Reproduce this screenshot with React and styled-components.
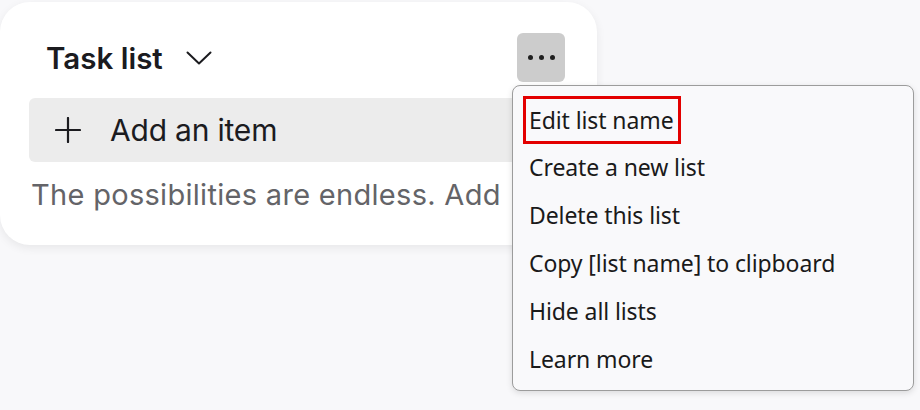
import React from "react";
import styled, { createGlobalStyle } from "styled-components";

const Global = createGlobalStyle`
  html, body { margin: 0; padding: 0; }
  body {
    background: #f8f8fa;
    width: 920px;
    height: 410px;
    overflow: hidden;
    font-family: "Inter", "Liberation Sans", sans-serif;
  }
`;

const Page = styled.div`
  position: relative;
  width: 920px;
  height: 410px;
  padding-top: 2px;
  box-sizing: border-box;
`;

const Card = styled.section`
  width: 597px;
  height: 243px;
  box-sizing: border-box;
  background: #ffffff;
  border-radius: 30px;
  box-shadow: 0 3px 10px rgba(0, 0, 0, 0.07);
  padding: 31px 32px 0 29px;
  display: flex;
  flex-direction: column;
`;

const Header = styled.div`
  display: flex;
  align-items: center;
  justify-content: space-between;
  height: 49px;
`;

const TitleGroup = styled.div`
  display: flex;
  align-items: center;
  gap: 23px;
  padding-left: 17px;
`;

const Title = styled.h2`
  margin: 0;
  font-size: 29.5px;
  font-weight: 600;
  color: #1b1b1f;
  letter-spacing: 0;
`;

const MoreButton = styled.button`
  width: 48px;
  height: 49px;
  border: none;
  border-radius: 6px;
  background: #cccccc;
  display: flex;
  align-items: center;
  justify-content: center;
  gap: 6px;
  padding: 0;
`;

const Dot = styled.span`
  width: 5px;
  height: 5px;
  border-radius: 50%;
  background: #1f1f1f;
`;

const AddRow = styled.div`
  margin-top: 16px;
  height: 64px;
  border-radius: 6px;
  background: #ececec;
  display: flex;
  align-items: center;
  padding-left: 26px;
  gap: 29px;
`;

const AddLabel = styled.span`
  font-size: 30px;
  color: #1b1b1f;
  font-weight: 400;
  letter-spacing: -0.2px;
`;

const Hint = styled.p`
  margin: 15px 0 0 2px;
  font-size: 29px;
  color: #646468;
  white-space: nowrap;
  letter-spacing: 0.3px;
`;

const Menu = styled.ul`
  position: absolute;
  left: 512px;
  top: 85px;
  width: 402px;
  height: 306px;
  box-sizing: border-box;
  margin: 0;
  list-style: none;
  padding: 9px 0 7px;
  background: #f9f9fb;
  border: 1px solid #9c9c9c;
  border-radius: 8px;
  box-shadow: 0 2px 6px rgba(0, 0, 0, 0.12);
  font-family: "Noto Sans", "Open Sans", sans-serif;
`;

const Item = styled.li`
  height: 48px;
  display: flex;
  align-items: center;
  padding-left: ${(p) => (p.$highlight ? "10px" : "16px")};
  font-size: 23px;
  color: #1a1a1a;
  letter-spacing: -0.1px;
`;

const Highlight = styled.span`
  display: inline-block;
  box-sizing: border-box;
  height: 48px;
  line-height: 42px;
  padding: 0 4px 0 3px;
  border: 3px solid #e30000;
  position: relative;
  top: 1px;
`;

const items = [
  "Create a new list",
  "Delete this list",
  "Copy [list name] to clipboard",
  "Hide all lists",
  "Learn more",
];

export default function App() {
  return (
    <>
      <Global />
      <Page>
        <Card>
          <Header>
            <TitleGroup>
              <Title>Task list</Title>
              <svg width="26" height="14" viewBox="0 0 26 14" fill="none">
                <path d="M1.5 1.5 L13 12.5 L24.5 1.5" stroke="#1b1b1f" strokeWidth="2" strokeLinecap="round" strokeLinejoin="round" />
              </svg>
            </TitleGroup>
            <MoreButton aria-label="More options">
              <Dot />
              <Dot />
              <Dot />
            </MoreButton>
          </Header>
          <AddRow>
            <svg width="26" height="26" viewBox="0 0 26 26" fill="none">
              <path d="M13 1 V25 M1 13 H25" stroke="#1b1b1f" strokeWidth="2.2" strokeLinecap="round" />
            </svg>
            <AddLabel>Add an item</AddLabel>
          </AddRow>
          <Hint>The possibilities are endless. Add</Hint>
        </Card>
        <Menu>
          <Item $highlight>
            <Highlight>Edit list name</Highlight>
          </Item>
          {items.map((t) => (
            <Item key={t}>{t}</Item>
          ))}
        </Menu>
      </Page>
    </>
  );
}
